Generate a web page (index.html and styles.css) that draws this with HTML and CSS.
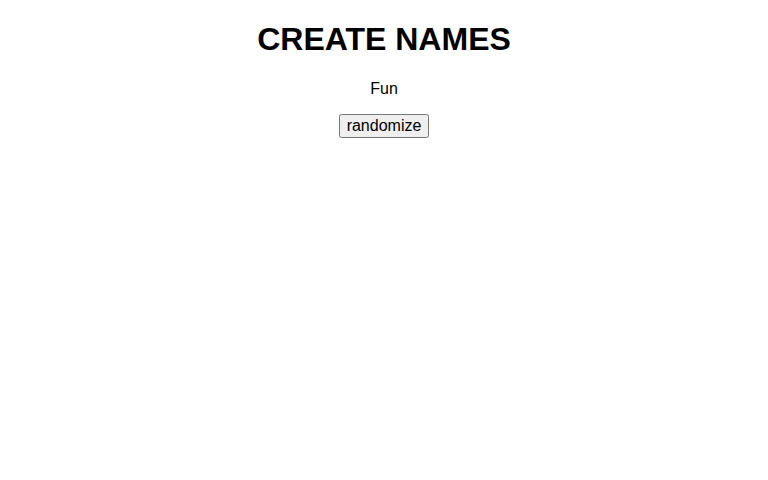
FILE: index.html
```html
<!DOCTYPE html>
<html lang="en">
<head>
    <meta charset="UTF-8">
    <meta name="viewport" content="width=device-width, initial-scale=1.0">
    <title>Create Names</title>
    <link rel="stylesheet" href="styles.css">
</head>
<body>
    <div class="app">
        <h1>CREATE NAMES</h1>
        <p id="name">Fun</p>
        <button id="randomize" class="btn">randomize</button>
    </div>
</body>
</html>
```

FILE: styles.css
```css
body {
    margin: 0;
    font-family: 'Liberation Sans', Arial, sans-serif;
}
.app {
    text-align: center;
}
.btn {
    font-family: inherit;
    font-size: 16px;
}
```
